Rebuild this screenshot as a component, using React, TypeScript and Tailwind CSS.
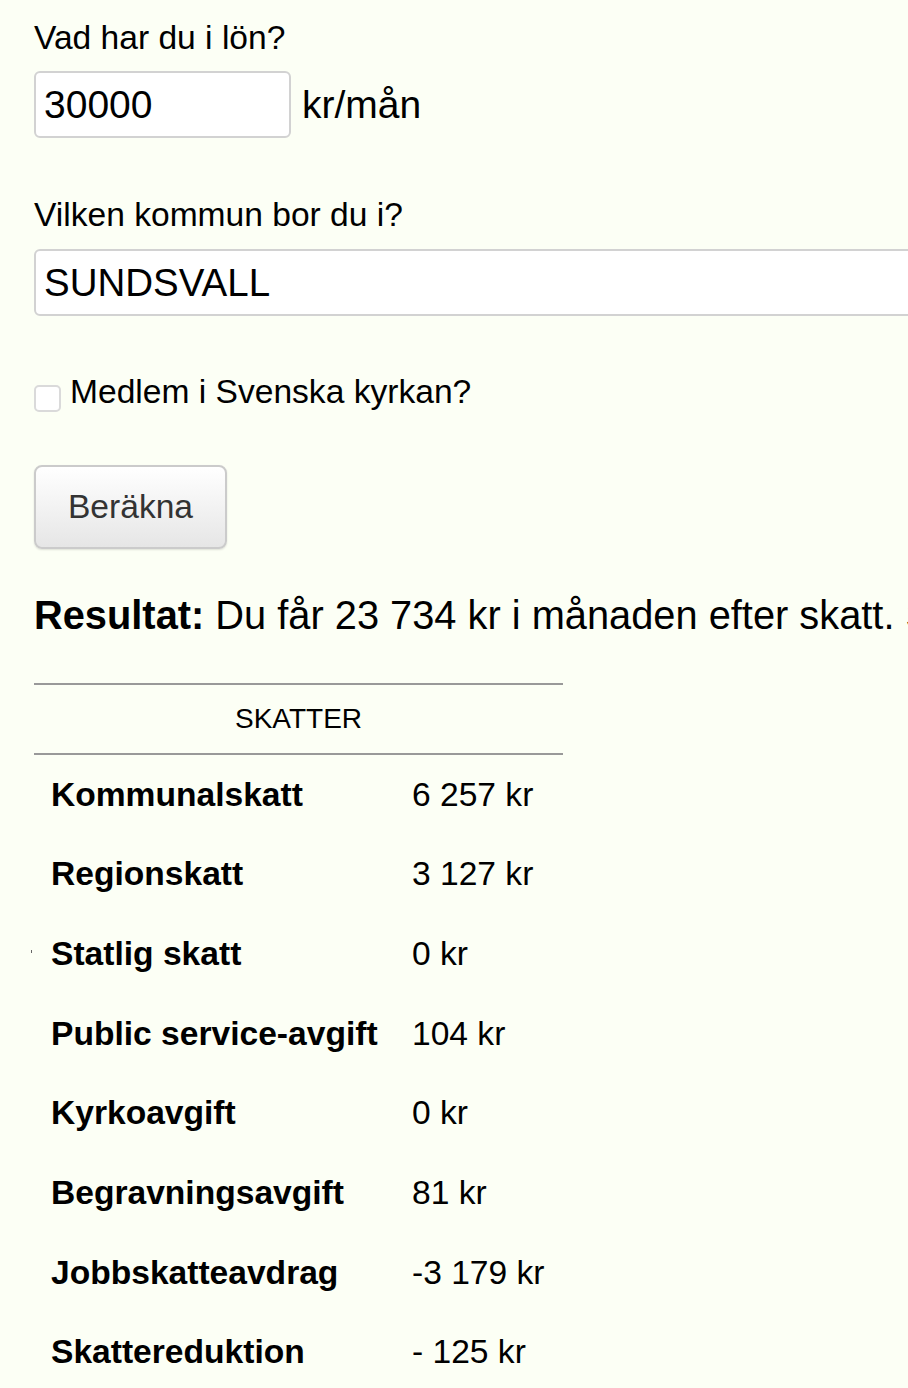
import React from 'react';

const rows: { label: string; value: string; mark?: boolean }[] = [
  { label: 'Kommunalskatt', value: '6 257 kr' },
  { label: 'Regionskatt', value: '3 127 kr' },
  { label: 'Statlig skatt', value: '0 kr', mark: true },
  { label: 'Public service-avgift', value: '104 kr' },
  { label: 'Kyrkoavgift', value: '0 kr' },
  { label: 'Begravningsavgift', value: '81 kr' },
  { label: 'Jobbskatteavdrag', value: '-3 179 kr' },
  { label: 'Skattereduktion', value: '- 125 kr' },
];

const App: React.FC = () => {
  return (
    <div className="h-[1388px] w-[908px] overflow-hidden bg-[#fcfff5] pl-[34px] pt-[18px] font-['Liberation_Sans',Arial,sans-serif] text-black">
      <label className="block text-[33.6px] leading-[40px]">Vad har du i lön?</label>
      <div className="mt-[13px] flex items-center">
        <input
          type="text"
          defaultValue="30000"
          className="h-[67px] w-[257px] rounded-[6px] border-2 border-[#d2d2d2] bg-white pl-[8px] text-[39px] text-black outline-none"
        />
        <span className="ml-[11px] text-[39px] leading-[46px]">kr/mån</span>
      </div>

      <label className="mt-[57px] block text-[33.6px] leading-[40px]">Vilken kommun bor du i?</label>
      <div className="mt-[14px] flex h-[67px] w-[1000px] items-center rounded-[6px] border-2 border-[#d2d2d2] bg-white pl-[8px] text-[38.5px]">
        SUNDSVALL
      </div>

      <div className="mt-[56px] flex items-start">
        <input
          type="checkbox"
          className="mt-[13px] h-[27px] w-[27px] appearance-none rounded-[5px] border-2 border-[#dadada] bg-white"
        />
        <span className="ml-[9px] text-[33.6px] leading-[40px]">Medlem i Svenska kyrkan?</span>
      </div>

      <button className="mt-[53px] flex h-[84px] w-[193px] items-center justify-center rounded-[8px] border-2 border-[#cbcbcb] bg-gradient-to-b from-white to-[#e6e6e6] text-[33.6px] text-[#333] shadow-[0_1px_2px_rgba(0,0,0,0.12)]">
        Beräkna
      </button>

      <p className="mt-[43px] whitespace-nowrap text-[39.8px] leading-[46px]">
        <b>Resultat:</b> Du får 23 734 kr i månaden efter skatt. Skatten blir 6 266 kr.
      </p>

      <div className="mt-[45px] w-[529px]">
        <div className="flex h-[72px] items-center justify-center border-y-2 border-[#999] text-[28px]">SKATTER</div>
        {rows.map((r) => (
          <div key={r.label} className="relative grid h-[79.7px] grid-cols-[361px_168px] items-center text-[33.6px]">
            {r.mark && <span className="absolute left-[-3px] top-[36px] h-[3px] w-[1px] bg-[#666]" />}
            <span className="pl-[17px] font-bold">{r.label}</span>
            <span className="pl-[17px]">{r.value}</span>
          </div>
        ))}
      </div>
    </div>
  );
};

export default App;
